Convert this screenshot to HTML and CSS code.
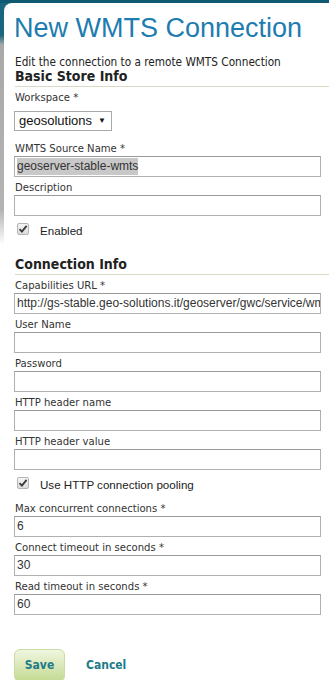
FILE: index.html
```html
<!DOCTYPE html>
<html>
<head>
<meta charset="utf-8">
<link rel="stylesheet" href="styles.css">
</head>
<body>
<div class="page">
  <h1 class="title">New WMTS Connection</h1>
  <p class="intro">Edit the connection to a remote WMTS Connection</p>
  <h2 class="section">Basic Store Info</h2>
  <div class="field">
    <label class="lbl">Workspace *</label>
    <div class="select"><span>geosolutions</span><span class="arrow">▼</span></div>
  </div>
  <div class="field">
    <label class="lbl">WMTS Source Name *</label>
    <div class="input"><span class="sel">geoserver-stable-wmts</span></div>
  </div>
  <div class="field">
    <label class="lbl">Description</label>
    <div class="input"></div>
  </div>
  <div class="check">
    <span class="box"><svg width="10" height="10" viewBox="0 0 10 10"><path d="M1.5 5.2 L3.9 7.6 L8.6 1.8" fill="none" stroke="#3c3c3c" stroke-width="1.9"/></svg></span>
    <span class="check-text">Enabled</span>
  </div>
  <h2 class="section sec2">Connection Info</h2>
  <div class="field">
    <label class="lbl">Capabilities URL *</label>
    <div class="input">http://gs-stable.geo-solutions.it/geoserver/gwc/service/wmts?REQUEST=getcapabilities</div>
  </div>
  <div class="field">
    <label class="lbl">User Name</label>
    <div class="input"></div>
  </div>
  <div class="field">
    <label class="lbl">Password</label>
    <div class="input"></div>
  </div>
  <div class="field">
    <label class="lbl">HTTP header name</label>
    <div class="input"></div>
  </div>
  <div class="field">
    <label class="lbl">HTTP header value</label>
    <div class="input"></div>
  </div>
  <div class="check">
    <span class="box"><svg width="10" height="10" viewBox="0 0 10 10"><path d="M1.5 5.2 L3.9 7.6 L8.6 1.8" fill="none" stroke="#3c3c3c" stroke-width="1.9"/></svg></span>
    <span class="check-text">Use HTTP connection pooling</span>
  </div>
  <div class="field f-after-check">
    <label class="lbl">Max concurrent connections *</label>
    <div class="input">6</div>
  </div>
  <div class="field">
    <label class="lbl">Connect timeout in seconds *</label>
    <div class="input">30</div>
  </div>
  <div class="field">
    <label class="lbl">Read timeout in seconds *</label>
    <div class="input">60</div>
  </div>
  <div class="buttons">
    <span class="save">Save</span>
    <span class="cancel">Cancel</span>
  </div>
</div>
</body>
</html>
```
FILE: styles.css
```css
html, body {
  margin: 0;
  padding: 0;
}
body {
  width: 329px;
  height: 680px;
  overflow: hidden;
  background:
    linear-gradient(to bottom, #0f5a72 0, #0f5a72 3px, transparent 3px),
    linear-gradient(to bottom, #1a6580 0, #1a6580 35px, #a9a9a9 45px, #b4b4b4 210px, #ffffff 245px);
  font-family: "DejaVu Sans Condensed", "DejaVu Sans", sans-serif;
  color: #222;
}
.page {
  margin: 3px 0 0 4px;
  background: #fff;
  border-top-left-radius: 8px;
  padding: 9px 0 0 10px;
  height: 677px;
  box-sizing: border-box;
  overflow: hidden;
}
.title {
  margin: 0;
  font-family: "Liberation Sans", Arial, sans-serif;
  font-weight: normal;
  font-size: 27px;
  line-height: 32px;
  color: #1d7cb0;
}
.intro {
  margin: 12px 0 0 1px;
  font-size: 11.7px;
  line-height: 12px;
  color: #222;
}
.section {
  margin: 0 0 0 1px;
  font-size: 14px;
  line-height: 16px;
  font-weight: bold;
  color: #222;
  border-bottom: 1px solid #d9d9c6;
  padding-bottom: 2px;
}
.sec2 {
  margin-top: 18px;
}
.field {
  display: flex;
  flex-direction: column;
  margin-top: 4px;
}
.lbl {
  display: block;
  font-size: 11.2px;
  line-height: 13px;
  color: #333;
  margin-left: 1px;
  margin-bottom: 1px;
}
.select {
  align-self: flex-start;
  margin: 6px 0 7px 0;
  width: 98px;
  height: 20px;
  box-sizing: border-box;
  border: 1px solid #a9a9a9;
  font-family: "Liberation Sans", Arial, sans-serif;
  font-size: 13px;
  line-height: 18px;
  padding: 0 5px 0 4px;
  display: flex;
  justify-content: space-between;
  color: #111;
}
.arrow {
  font-size: 8px;
  line-height: 17px;
}
.input {
  width: 307px;
  height: 21px;
  box-sizing: border-box;
  border: 1px solid #b0b0b0;
  border-top-color: #9a9a9a;
  font-family: "Liberation Sans", Arial, sans-serif;
  font-size: 12px;
  line-height: 19px;
  padding-left: 2px;
  white-space: nowrap;
  overflow: hidden;
  color: #333;
}
.sel {
  background: #c8c8c8;
  padding: 1px 0 2px;
}
.check {
  display: flex;
  align-items: center;
  margin: 6px 0 0 3px;
  height: 16px;
}
.box {
  width: 12px;
  height: 12px;
  box-sizing: border-box;
  border: 1px solid #b5b5b5;
  border-radius: 2px;
  background: linear-gradient(#f6f6f6, #dddddd);
  display: flex;
  align-items: center;
  justify-content: center;
  margin-top: -2px;
}
.check-text {
  margin-left: 11px;
  font-family: "Liberation Sans", Arial, sans-serif;
  font-size: 11.6px;
  color: #222;
}
.f-after-check {
  margin-top: 10px;
}
.buttons {
  display: flex;
  align-items: center;
  margin-top: 34px;
}
.save {
  width: 51px;
  height: 33px;
  border: 1px solid #cadca6;
  border-radius: 6px;
  background: linear-gradient(#f0f6e0, #c4da92);
  color: #1d7b8a;
  font-weight: bold;
  font-size: 12px;
  display: flex;
  align-items: center;
  justify-content: center;
  box-sizing: border-box;
  padding-bottom: 2px;
}
.cancel {
  margin-left: 21px;
  color: #1d7b8a;
  font-weight: bold;
  font-size: 12px;
  padding-bottom: 2px;
}
```
